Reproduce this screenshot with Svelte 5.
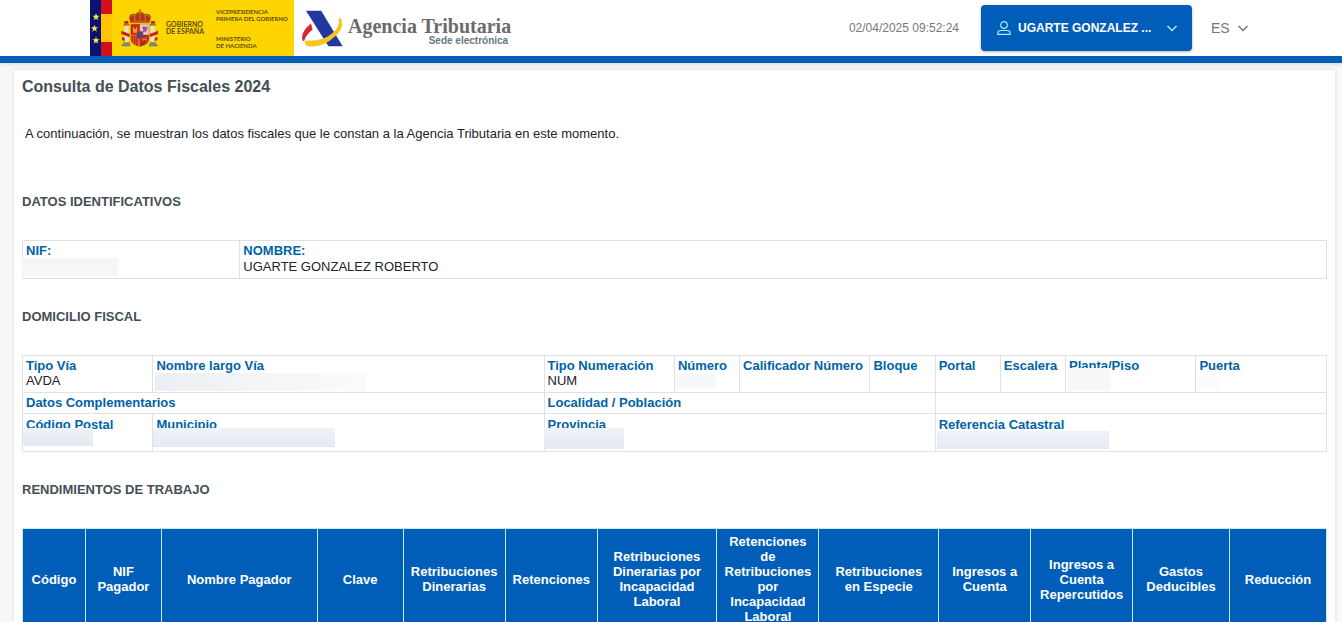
<script lang="ts">
	interface Mask {
		x: number;
		y: number;
		w: number;
		h: number;
		tone: string;
	}

	interface Cell {
		label: string;
		span: number;
		value?: string;
		mask?: Mask;
	}

	let language = $state('ES');

	const identity: Cell[] = [
		{ label: 'NIF:', span: 2, mask: { x: -1, y: 17, w: 96, h: 18, tone: 'grey' } },
		{ label: 'NOMBRE:', span: 10, value: 'UGARTE GONZALEZ ROBERTO' },
	];

	const address: Cell[][] = [
		[
			{ label: 'Tipo Vía', span: 2, value: 'AVDA' },
			{ label: 'Nombre largo Vía', span: 6, mask: { x: 2, y: 17, w: 211, h: 18, tone: 'fade' } },
			{ label: 'Tipo Numeración', span: 2, value: 'NUM' },
			{ label: 'Número', span: 1, mask: { x: 0, y: 18, w: 41, h: 14, tone: 'pale' } },
			{ label: 'Calificador Número', span: 2 },
			{ label: 'Bloque', span: 1 },
			{ label: 'Portal', span: 1 },
			{ label: 'Escalera', span: 1 },
			{ label: 'Planta/Piso', span: 2, mask: { x: 1, y: 12, w: 44, h: 23, tone: 'pale' } },
			{ label: 'Puerta', span: 2, mask: { x: 2, y: 21, w: 23, h: 13, tone: 'faint' } },
		],
		[
			{ label: 'Datos Complementarios', span: 8 },
			{ label: 'Localidad / Población', span: 6 },
			{ label: '', span: 6 },
		],
		[
			{ label: 'Código Postal', span: 2, mask: { x: 0, y: 14, w: 70, h: 18, tone: 'blue' } },
			{ label: 'Municipio', span: 6, mask: { x: 0, y: 14, w: 182, h: 19, tone: 'blue' } },
			{ label: 'Provincia', span: 6, mask: { x: -1, y: 14, w: 80, h: 21, tone: 'blue' } },
			{ label: 'Referencia Catastral', span: 6, mask: { x: 1, y: 17, w: 172, h: 18, tone: 'blue' } },
		],
	];

	// widths are relative, they add up to 1305
	const incomeColumns = [
		{ title: 'Código', width: 63 },
		{ title: 'NIF Pagador', width: 76 },
		{ title: 'Nombre Pagador', width: 156 },
		{ title: 'Clave', width: 86 },
		{ title: 'Retribuciones Dinerarias', width: 102 },
		{ title: 'Retenciones', width: 92 },
		{ title: 'Retribuciones Dinerarias por Incapacidad Laboral', width: 120 },
		{ title: 'Retenciones de Retribuciones por Incapacidad Laboral', width: 102 },
		{ title: 'Retribuciones en Especie', width: 120 },
		{ title: 'Ingresos a Cuenta', width: 92 },
		{ title: 'Ingresos a Cuenta Repercutidos', width: 102 },
		{ title: 'Gastos Deducibles', width: 97 },
		{ title: 'Reducción', width: 97 },
	];
	const total = incomeColumns.reduce((sum, c) => sum + c.width, 0);
</script>

{#snippet cell(c: Cell)}
	<td colspan={c.span}>
		<span class="label">{c.label}</span>
		{#if c.value}
			<span class="value">{c.value}</span>
		{/if}
		{#if c.mask}
			<span
				class="mask {c.mask.tone}"
				style="left: {c.mask.x}px; top: {c.mask.y}px; width: {c.mask.w}px; height: {c.mask.h}px"
			></span>
		{/if}
	</td>
{/snippet}

{#snippet chevron()}
	<svg class="chevron" viewBox="0 0 12 12" aria-hidden="true">
		<path d="M1.5 4 6 8.5 10.5 4" fill="none" stroke="currentColor" stroke-width="1.5" />
	</svg>
{/snippet}

<header>
	<div class="government">
		<svg class="flags" viewBox="0 0 22 56" aria-hidden="true">
			<rect width="11" height="56" fill="#0a1172" />
			<rect x="11" width="11" height="56" fill="#ffc400" />
			<rect x="11" width="11" height="14" fill="#d0101b" />
			<rect x="11" y="42" width="11" height="14" fill="#d0101b" />
			<g fill="#ffe94a">
				<path d="M6 13.2l1 2.6h2.6l-2.1 1.7.8 2.7L6 18.6l-2.3 1.6.8-2.7-2.1-1.7H5z" />
				<path d="M4.5 24.7l1 2.6h2.6L6 29l.8 2.7-2.3-1.6-2.3 1.6L3 29 .9 27.3h2.6z" />
				<path d="M6 36.7l1 2.6h2.6l-2.1 1.7.8 2.7L6 42.1l-2.3 1.6.8-2.7-2.1-1.7H5z" />
			</g>
		</svg>
		<svg class="arms" viewBox="120 24 120 117" aria-hidden="true">
			<path d="M134 72h12v58h-12zM212 72h12v58h-12z" fill="#e3e0d0" />
			<path d="M131 68h17v6h-17zM210 68h17v6h-17zM130 124h19v5h-19zM209 124h19v5h-19z" fill="#a87912" />
			<path d="M133 60h12v8h-12zM213 60h12v8h-12z" fill="#c52a20" />
			<path d="M125 130h26v6h-26zM207 130h26v6h-26z" fill="#5b8583" />
			<path d="M124 89l25 10v10l-25-10zM234 89l-25 10v10l25-10z" fill="#c8201d" />
			<path d="M126 107l8 4v10l-8-4zM232 107l-8 4v10l8-4z" fill="#c8201d" />
			<path d="M151 68h57v46q0 18-28 24-29-6-29-24z" fill="#b78a19" />
			<path d="M153 70h26v31h-26z" fill="#d51f25" />
			<path d="M180 70h26v31h-26z" fill="#e3c8d4" />
			<path d="M153 102h26v34q-26-7-26-23z" fill="#d9701c" />
			<path d="M180 102h26v11q0 16-26 23z" fill="#bd1c29" />
			<path d="M157 104v20M164 104v26M171 104v30" stroke="#c5171f" stroke-width="4" />
			<path d="M184 107l18 16M202 107l-18 16M184 115h18" stroke="#dea31c" stroke-width="2" />
			<path d="M159 95V79h4v5h5v-5h4v16z" fill="#e1a41c" />
			<path d="M187 94l3-9-4-4 5-5 8 3 3-4v10l-4 5 2 5-6-4-3 4z" fill="#9c5590" />
			<ellipse cx="180" cy="102" rx="10" ry="12" fill="#c52835" />
			<ellipse cx="180" cy="102" rx="7" ry="9" fill="#24569b" />
			<path d="M151 65l-4-17q5-12 19-9 5-7 14-7t14 7q15-3 19 9l-5 17z" fill="#c3291d" />
			<path
				d="M151 64q28-7 57 0M148 50q7-9 18-8-5 8 0 19M180 34v27M212 50q-7-9-18-8 5 8 0 19M166 42q7-8 14-8t14 8"
				fill="none"
				stroke="#a6790c"
				stroke-width="4"
			/>
			<path d="M180 24v9M176 28h8" stroke="#9c6f12" stroke-width="3" />
		</svg>
		<div class="country">GOBIERNO<br />DE ESPAÑA</div>
		<div class="ministry">
			<div>VICEPRESIDENCIA<br />PRIMERA DEL GOBIERNO</div>
			<div>MINISTERIO<br />DE HACIENDA</div>
		</div>
	</div>

	<a class="agency" href="#inicio">
		<svg viewBox="0 0 124 112" aria-hidden="true">
			<path d="M12 2h46l65 108H80z" fill="#2337a0" />
			<path d="M27 41Q-4 65 1 90q1 5 6 3 3-16 25-34z" fill="#d9272e" />
			<path
				d="M9 93q52 3 81-21 28-24 20-44 5-7 9 0 9 26-18 51-38 37-82 31-12-2-10-17z"
				fill="#f2c61d"
			/>
		</svg>
		<span class="names">
			<span class="agency-name">Agencia Tributaria</span>
			<span class="site-name">Sede electrónica</span>
		</span>
	</a>

	<time datetime="2025-04-02T09:52:24">02/04/2025 09:52:24</time>

	<button class="user" type="button">
		<svg class="person" viewBox="0 0 14 14" aria-hidden="true">
			<g fill="none" stroke="currentColor" stroke-width="1.2">
				<circle cx="7" cy="4" r="3.3" />
				<path d="M.8 13.3V12Q.8 9.500 3.500 9.500h7Q13.200 9.500 13.200 12v1.300z" />
			</g>
		</svg>
		<span>UGARTE GONZALEZ ...</span>
		{@render chevron()}
	</button>

	<div class="language">
		<select bind:value={language} aria-label="Idioma">
			<option>ES</option>
		</select>
		{@render chevron()}
	</div>
</header>

<main>
	<h1>Consulta de Datos Fiscales 2024</h1>
	<p>A continuación, se muestran los datos fiscales que le constan a la Agencia Tributaria en este momento.</p>

	<h2>DATOS IDENTIFICATIVOS</h2>
	<table class="details identity">
		<colgroup>
			{#each { length: 12 } as _}<col />{/each}
		</colgroup>
		<tbody>
			<tr>
				{#each identity as c}{@render cell(c)}{/each}
			</tr>
		</tbody>
	</table>

	<h2>DOMICILIO FISCAL</h2>
	<table class="details address">
		<colgroup>
			{#each { length: 20 } as _}<col />{/each}
		</colgroup>
		<tbody>
			{#each address as row}
				<tr>
					{#each row as c}{@render cell(c)}{/each}
				</tr>
			{/each}
		</tbody>
	</table>

	<h2>RENDIMIENTOS DE TRABAJO</h2>
	<table class="income">
		<colgroup>
			{#each incomeColumns as column}
				<col style="width: {(column.width / total) * 100}%" />
			{/each}
		</colgroup>
		<thead>
			<tr>
				{#each incomeColumns as column}
					<th scope="col">{column.title}</th>
				{/each}
			</tr>
		</thead>
	</table>
</main>

<style>
	:global(body) {
		background: #f8f8f8;
		font-family: 'Liberation Sans', Arial, sans-serif;
		font-size: 13px;
		line-height: 16px;
		color: #212529;
	}

	header {
		display: flex;
		align-items: center;
		height: 56px;
		padding: 0 93px 0 90px;
		background: #fff;
		border-bottom: 7px solid #005eb8;
		box-shadow: 0 1px 4px rgba(0, 0, 0, 0.15);
	}

	.government {
		display: flex;
		align-items: center;
		width: 204px;
		height: 56px;
		background: #ffd500;
		color: #5e4a10;
		font-family: Lato, sans-serif;
		font-size: 7px;
		font-weight: bold;
		line-height: 7px;
		white-space: nowrap;
	}

	.flags {
		flex: none;
		width: 22px;
		height: 56px;
	}

	.arms {
		flex: none;
		width: 40px;
		height: 39px;
		margin-left: 8px;
	}

	.country {
		width: 44px;
		margin-left: 6px;
	}

	.ministry {
		display: flex;
		flex-direction: column;
		gap: 13px;
		margin-left: 6px;
		font-size: 6px;
	}

	.agency {
		display: flex;
		align-items: center;
		gap: 5px;
		margin-left: 8px;
		color: #6b6b6b;
		text-decoration: none;
	}

	.agency svg {
		width: 41px;
		height: 37px;
	}

	.names {
		display: flex;
		flex-direction: column;
		align-items: flex-end;
		padding-top: 6px;
	}

	.agency-name {
		font: bold 20px/20px 'Liberation Serif', serif;
	}

	.site-name {
		padding-right: 3px;
		font-size: 10px;
		font-weight: bold;
		line-height: 10px;
		color: #66757f;
	}

	time {
		margin-left: auto;
		font-size: 12px;
		color: #777;
	}

	.user {
		display: flex;
		align-items: center;
		gap: 7px;
		width: 211px;
		height: 46px;
		margin-left: 22px;
		padding: 0 14px 0 16px;
		border: 0;
		border-radius: 4px;
		background: #005eb8;
		box-shadow: 0 1px 3px rgba(0, 0, 0, 0.3);
		color: #fff;
		font: bold 12px/16px 'Liberation Sans', Arial, sans-serif;
		cursor: pointer;
	}

	.person {
		width: 14px;
		height: 14px;
		color: #a5f0ff;
	}

	.chevron {
		width: 12px;
		height: 12px;
	}

	.user .chevron {
		margin-left: auto;
		color: #a5f0ff;
	}

	.language {
		display: flex;
		align-items: center;
		gap: 7px;
		margin-left: 19px;
		color: #777;
	}

	select {
		appearance: none;
		padding: 0;
		border: 0;
		background: none;
		color: inherit;
		font: 14px/16px 'Liberation Sans', Arial, sans-serif;
	}

	main {
		margin: 7px 7px 0 14px;
		padding: 7px 8px 30px;
		background: #fff;
		box-shadow: 0 0 4px rgba(0, 0, 0, 0.12);
	}

	h1 {
		margin: 0;
		font-size: 16px;
		line-height: 20px;
		color: #444f55;
	}

	p {
		margin: 29px 3px 52px;
	}

	h2 {
		margin: 30px 0;
		font-size: 13px;
		line-height: 16px;
		color: #444f55;
	}

	table {
		width: 100%;
		table-layout: fixed;
		border-collapse: collapse;
	}

	.details td {
		position: relative;
		padding: 2px 3px;
		border: 1px solid #dee2e6;
		vertical-align: top;
		white-space: nowrap;
	}

	.identity td {
		height: 33px;
	}

	.address td {
		height: 32px;
		line-height: 15px;
	}

	.address tr:nth-child(2) td {
		height: 16px;
	}

	.address tr:last-child td {
		padding-top: 3px;
	}

	.label,
	.value {
		display: block;
	}

	.label {
		font-weight: bold;
		color: #0063a6;
	}

	.mask {
		position: absolute;
	}

	.grey {
		background: #f6f6f6;
	}

	.pale {
		background: #f6f8fa;
	}

	.faint {
		background: #fcfcfc;
	}

	.fade {
		background: linear-gradient(to right, #ebeff3, #fbfbfb);
	}

	.blue {
		background: linear-gradient(to bottom, #eff3f7, #e3eaf1);
	}

	.income th {
		height: 96px;
		padding: 2px 7px;
		border: 1px solid #c5e9f5;
		background: #005eb8;
		color: #fff;
		line-height: 15px;
	}
</style>
